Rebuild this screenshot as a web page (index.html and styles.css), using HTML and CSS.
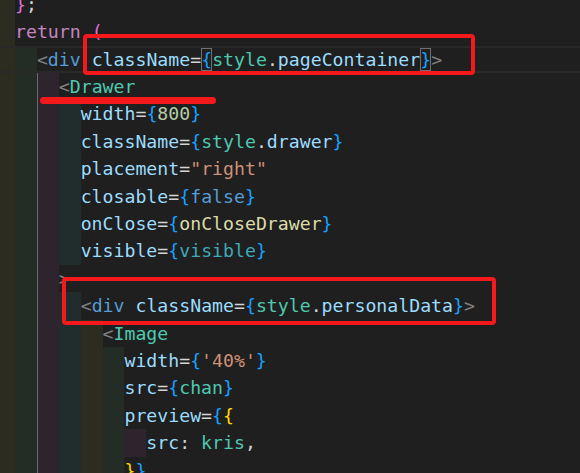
FILE: index.html
```html
<!DOCTYPE html>
<html lang="en">
<head>
  <meta charset="UTF-8" />
  <meta name="viewport" content="width=device-width, initial-scale=1.0" />
  <title>Drawer.jsx</title>
  <link rel="stylesheet" href="styles.css">
</head>
<body>
  <div class="editor">
    <div class="line"><span class="lead"></span><span class="code"><span class="br2">}</span>;</span></div>
    <div class="line"><span class="lead"></span><span class="code"><span class="kw">return</span> <span class="br2">(</span></span></div>
    <div class="line current"><span class="lead"></span><span class="ind g"></span><span class="code"><span class="pn">&lt;</span><span class="tag">div</span> <span class="attr">className</span>=<span class="br3 match">{</span><span class="obj">style</span>.<span class="attr">pageContainer</span><span class="br3 match">}</span><span class="pn">&gt;</span></span></div>
    <div class="line"><span class="lead"></span><span class="ind g"></span><span class="ind p act"></span><span class="code"><span class="pn">&lt;</span><span class="cmp">Drawer</span></span></div>
    <div class="line"><span class="lead"></span><span class="ind g"></span><span class="ind p act"></span><span class="ind c"></span><span class="code"><span class="attr">width</span>=<span class="br3">{</span><span class="num">800</span><span class="br3">}</span></span></div>
    <div class="line"><span class="lead"></span><span class="ind g"></span><span class="ind p act"></span><span class="ind c"></span><span class="code"><span class="attr">className</span>=<span class="br3">{</span><span class="obj">style</span>.<span class="attr">drawer</span><span class="br3">}</span></span></div>
    <div class="line"><span class="lead"></span><span class="ind g"></span><span class="ind p act"></span><span class="ind c"></span><span class="code"><span class="attr">placement</span>=<span class="str">"right"</span></span></div>
    <div class="line"><span class="lead"></span><span class="ind g"></span><span class="ind p act"></span><span class="ind c"></span><span class="code"><span class="attr">closable</span>=<span class="br3">{</span><span class="tag">false</span><span class="br3">}</span></span></div>
    <div class="line"><span class="lead"></span><span class="ind g"></span><span class="ind p act"></span><span class="ind c"></span><span class="code"><span class="attr">onClose</span>=<span class="br3">{</span><span class="fn">onCloseDrawer</span><span class="br3">}</span></span></div>
    <div class="line"><span class="lead"></span><span class="ind g"></span><span class="ind p act"></span><span class="ind c"></span><span class="code"><span class="attr">visible</span>=<span class="br3">{</span><span class="const">visible</span><span class="br3">}</span></span></div>
    <div class="line"><span class="lead"></span><span class="ind g"></span><span class="ind p act"></span><span class="code"><span class="pn">&gt;</span></span></div>
    <div class="line"><span class="lead"></span><span class="ind g"></span><span class="ind p act"></span><span class="ind c"></span><span class="code"><span class="pn">&lt;</span><span class="tag">div</span> <span class="attr">className</span>=<span class="br3">{</span><span class="obj">style</span>.<span class="attr">personalData</span><span class="br3">}</span><span class="pn">&gt;</span></span></div>
    <div class="line"><span class="lead"></span><span class="ind g"></span><span class="ind p act"></span><span class="ind c"></span><span class="ind y"></span><span class="code"><span class="pn">&lt;</span><span class="cmp">Image</span></span></div>
    <div class="line"><span class="lead"></span><span class="ind g"></span><span class="ind p act"></span><span class="ind c"></span><span class="ind y"></span><span class="ind g"></span><span class="code"><span class="attr">width</span>=<span class="br3">{</span><span class="str">'40%'</span><span class="br3">}</span></span></div>
    <div class="line"><span class="lead"></span><span class="ind g"></span><span class="ind p act"></span><span class="ind c"></span><span class="ind y"></span><span class="ind g"></span><span class="code"><span class="attr">src</span>=<span class="br3">{</span><span class="obj">chan</span><span class="br3">}</span></span></div>
    <div class="line"><span class="lead"></span><span class="ind g"></span><span class="ind p act"></span><span class="ind c"></span><span class="ind y"></span><span class="ind g"></span><span class="code"><span class="attr">preview</span>=<span class="br3">{</span><span class="br1">{</span></span></div>
    <div class="line"><span class="lead"></span><span class="ind g"></span><span class="ind p act"></span><span class="ind c"></span><span class="ind y"></span><span class="ind g"></span><span class="ind p"></span><span class="code"><span class="attr">src</span>: <span class="obj">kris</span>,</span></div>
    <div class="line"><span class="lead"></span><span class="ind g"></span><span class="ind p act"></span><span class="ind c"></span><span class="ind y"></span><span class="ind g"></span><span class="code"><span class="br1">}</span><span class="br3">}</span></span></div>

    <!-- hand-drawn annotations -->
    <div class="mark box-one"></div>
    <div class="mark underline"></div>
    <div class="mark box-two"></div>
  </div>
</body>
</html>
```

FILE: styles.css
```css
:root {
  --bg: #1f1f1f;
  --text: #d4d4d4;
  --red: #f5191b;
  --band-y: #2c2c20;
  --band-g: #242d25;
  --band-p: #2d242d;
  --band-c: #212c2c;
}

html, body {
  margin: 0;
  height: 100%;
  background: var(--bg);
  overflow: hidden;
}

.editor {
  position: relative;
  margin-top: -9.1px;
  font-family: "DejaVu Sans Mono", "Liberation Mono", monospace;
  font-size: 18.2px;
  color: var(--text);
}

.line {
  display: flex;
  height: 27.4px;
  line-height: 27.4px;
  white-space: pre;
  box-sizing: border-box;
}
.line.current {
  border-top: 2px solid #292929;
  border-bottom: 2px solid #292929;
  line-height: 23.4px;
}

.lead { width: 15px; flex: none; background: var(--band-y); }
.ind { width: 2ch; flex: none; box-sizing: border-box; }
.ind.g { background: var(--band-g); }
.ind.p { background: var(--band-p); }
.ind.c { background: var(--band-c); }
.ind.y { background: var(--band-y); }
.ind.act { border-left: 1px solid #6a6a6a; }

/* syntax colours */
.kw { color: #c586c0; }
.pn { color: #808080; }
.tag { color: #569cd6; }
.cmp { color: #4ec9b0; }
.attr { color: #9cdcfe; }
.obj { color: #4ec9b0; }
.num { color: #b5cea8; }
.str { color: #ce9178; }
.fn { color: #dcdcaa; }
.const { color: #3fa8b9; }
.br1 { color: #ffd700; }
.br2 { color: #da70d6; }
.br3 { color: #179fff; }

.match {
  display: inline-block;
  height: 100%;
  outline: 1px solid #707070;
  outline-offset: -1px;
}

.mark { position: absolute; }
.box-one {
  left: 83px;
  top: 43px;
  width: 384px;
  height: 33px;
  border: 4px solid var(--red);
  border-radius: 4px;
}
.underline {
  left: 40px;
  top: 106px;
  width: 176px;
  height: 7px;
  border-radius: 4px;
  background: var(--red);
}
.box-two {
  left: 62px;
  top: 286px;
  width: 426px;
  height: 40px;
  border: 4px solid var(--red);
  border-radius: 4px;
}
```
